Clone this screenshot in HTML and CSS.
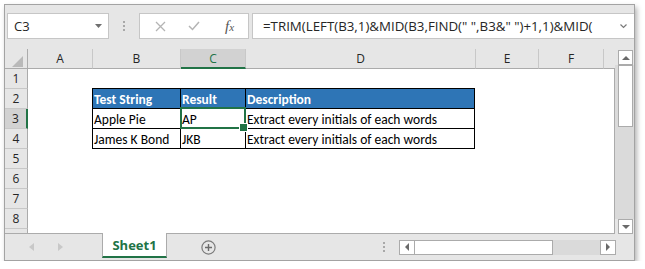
FILE: index.html
```html
<!DOCTYPE html>
<html lang="en">
<head>
  <meta charset="UTF-8">
  <title>Extract initials</title>
  <link rel="stylesheet" href="styles.css">
</head>
<body>
  <div class="window">
    <!-- formula bar -->
    <div class="fbar">
      <div class="box namebox">
        <span>C3</span>
        <svg width="7" height="4" viewBox="0 0 7 4"><polygon points="0,0 7,0 3.5,4" fill="#6f6f6f"/></svg>
      </div>
      <div class="grip"><i></i><i></i><i></i></div>
      <div class="box fxbox">
        <svg class="ico-x" width="11" height="11" viewBox="0 0 11 11"><path d="M1 1 L10 10 M10 1 L1 10" stroke="#b4b4b4" stroke-width="1.3"/></svg>
        <svg class="ico-ok" width="12" height="10" viewBox="0 0 12 10"><polyline points="1,5 4.5,8.5 11,1" fill="none" stroke="#b4b4b4" stroke-width="1.5"/></svg>
        <span class="fx">f<small>x</small></span>
      </div>
      <div class="box formula">
        <span>=TRIM(LEFT(B3,1)&amp;MID(B3,FIND(" ",B3&amp;" ")+1,1)&amp;MID(</span>
        <svg width="7" height="5" viewBox="0 0 7 5"><polyline points="0.5,0.5 3.5,3.5 6.5,0.5" fill="none" stroke="#7a7a7a" stroke-width="1.2"/></svg>
      </div>
    </div>

    <!-- sheet -->
    <div class="sheet">
      <div class="grid">
        <div class="colheads">
          <div class="corner"><svg width="11" height="11" viewBox="0 0 11 11"><polygon points="11,0 11,11 0,11" fill="#b9b9b9"/></svg></div>
          <div class="ch col-a">A</div>
          <div class="ch col-b">B</div>
          <div class="ch col-c sel">C</div>
          <div class="ch col-d">D</div>
          <div class="ch col-e">E</div>
          <div class="ch col-f">F</div>
          <div class="ch fill"></div>
        </div>
        <div class="body">
          <div class="rowheads">
            <div class="rh">1</div>
            <div class="rh">2</div>
            <div class="rh sel">3</div>
            <div class="rh">4</div>
            <div class="rh">5</div>
            <div class="rh">6</div>
            <div class="rh">7</div>
            <div class="rh">8</div>
            <div class="rh"></div>
          </div>
          <div class="cells">
            <div class="tbl">
              <div class="th">Test String</div>
              <div class="th">Result</div>
              <div class="th">Description</div>
              <div>Apple Pie</div>
              <div class="active">AP</div>
              <div>Extract every initials of each words</div>
              <div>James K Bond</div>
              <div>JKB</div>
              <div>Extract every initials of each words</div>
            </div>
          </div>
        </div>
      </div>
      <div class="vscroll">
        <div class="sbtn up"><svg width="8" height="4" viewBox="0 0 8 4"><polygon points="0,4 8,4 4,0" fill="#6a6a6a"/></svg></div>
        <div class="vtrack"><div class="vthumb"></div></div>
        <div class="sbtn down"><svg width="8" height="4" viewBox="0 0 8 4"><polygon points="0,0 8,0 4,4" fill="#6a6a6a"/></svg></div>
      </div>
    </div>

    <!-- sheet tabs -->
    <div class="tabbar">
      <div class="nav">
        <svg width="5" height="8" viewBox="0 0 5 8"><polygon points="5,0 5,8 0,4" fill="#c8c8c8"/></svg>
        <svg width="5" height="8" viewBox="0 0 5 8"><polygon points="0,0 0,8 5,4" fill="#c8c8c8"/></svg>
      </div>
      <div class="tab">Sheet1</div>
      <svg class="add" width="15" height="15" viewBox="0 0 15 15"><circle cx="7.5" cy="7.5" r="6.6" fill="none" stroke="#7b7b7b" stroke-width="1.2"/><path d="M7.5 4 V11 M4 7.5 H11" stroke="#6b6b6b" stroke-width="1.4"/></svg>
      <div class="grip"><i></i><i></i><i></i></div>
      <div class="hscroll">
        <div class="sbtn"><svg width="4" height="8" viewBox="0 0 4 8"><polygon points="4,0 4,8 0,4" fill="#6a6a6a"/></svg></div>
        <div class="hthumb"></div>
        <div class="htrack"></div>
        <div class="sbtn"><svg width="4" height="8" viewBox="0 0 4 8"><polygon points="0,0 0,8 4,4" fill="#6a6a6a"/></svg></div>
      </div>
    </div>
  </div>
</body>
</html>
```

FILE: styles.css
```css
* {
  box-sizing: border-box;
}
body {
  margin: 0;
  background: #fff;
  font-family: "Segoe UI", "Open Sans", sans-serif;
  font-size: 12px;
  color: #262626;
}
.window {
  margin: 4px 0 0 4px;
  width: 631px;
  height: 257px;
  border: 1px solid #a3a3a3;
  background: #e6e6e6;
  box-shadow: 2px 3px 5px rgba(0, 0, 0, 0.3);
  display: flex;
  flex-direction: column;
  overflow: hidden;
}

/* formula bar */
.fbar {
  height: 44px;
  flex: none;
  display: flex;
  align-items: flex-start;
  padding: 8px 0 0 2px;
}
.box {
  height: 26px;
  background: #fff;
  border: 1px solid #c6c6c6;
  display: flex;
  align-items: center;
}
.namebox {
  width: 102px;
  padding: 0 6px;
  justify-content: space-between;
  font-size: 13px;
}
.grip {
  width: 30px;
  height: 26px;
  display: flex;
  flex-direction: column;
  align-items: center;
  justify-content: center;
  gap: 2px;
}
.grip i {
  width: 2px;
  height: 2px;
  background: #a8a8a8;
}
.fxbox {
  width: 110px;
  padding-left: 15px;
}
.ico-ok {
  margin-left: 22px;
}
.fx {
  margin-left: 25px;
  font-family: "Liberation Serif", serif;
  font-style: italic;
  font-size: 15px;
  color: #555;
}
.fx small {
  font-size: 11px;
}
.formula {
  flex: 1;
  margin-left: 3px;
  border-right: none;
  padding: 0 7px 0 10px;
  justify-content: space-between;
  white-space: nowrap;
  overflow: hidden;
  font-size: 13.3px;
}

/* grid */
.sheet {
  height: 185px;
  flex: none;
  display: flex;
}
.grid {
  width: 610px;
  display: flex;
  flex-direction: column;
}
.colheads {
  height: 20px;
  flex: none;
  display: flex;
}
.colheads > div {
  border-bottom: 1px solid #ababab;
  border-right: 1px solid #c8c8c8;
  display: flex;
  align-items: center;
  justify-content: center;
}
.corner {
  width: 23px;
  padding: 6px 0 0 2px;
  border-right-color: #ababab !important;
}
.col-a { width: 65px; }
.col-b { width: 88px; }
.col-c { width: 65px; }
.col-d { width: 230px; }
.col-e { width: 63px; }
.col-f { width: 65px; }
.colheads .fill {
  flex: 1;
  border-right: none;
}
.ch.sel {
  background: #d2d2d2;
  color: #217346;
  border-bottom: 2px solid #217346;
}
.body {
  flex: 1;
  display: flex;
  border-right: 1px solid #ababab;
  border-bottom: 1px solid #ababab;
  overflow: hidden;
}
.rowheads {
  width: 23px;
  flex: none;
}
.rh {
  height: 20px;
  border-right: 1px solid #ababab;
  border-bottom: 1px solid #c8c8c8;
  display: flex;
  align-items: center;
  justify-content: center;
}
.rh.sel {
  background: #d2d2d2;
  border-right: 2px solid #217346;
}
.cells {
  flex: 1;
  background: #fff;
  padding: 19px 0 0 64px;
}

/* data table */
.tbl {
  display: grid;
  grid-template-columns: 88px 65px 229px;
  grid-auto-rows: 20px;
  width: max-content;
  border-left: 1px solid #000;
  border-top: 1px solid #000;
  font-family: "Carlito", "Lato", sans-serif;
  font-size: 13.5px;
  color: #000;
}
.tbl > div {
  border-right: 1px solid #000;
  border-bottom: 1px solid #000;
  padding: 1px 0 0 1px;
  line-height: 19px;
  white-space: nowrap;
}
.tbl .th {
  background: #2e75b6;
  color: #fff;
  font-weight: bold;
}
.tbl .active {
  position: relative;
}
.tbl .active::after {
  content: "";
  position: absolute;
  top: -2px;
  left: -1px;
  right: -1px;
  bottom: -1px;
  border: 2px solid #217346;
}
.tbl .active::before {
  content: "";
  position: absolute;
  right: -3px;
  bottom: -4px;
  width: 7px;
  height: 7px;
  background: #217346;
  border: 1px solid #fff;
  z-index: 1;
}

/* scrollbars */
.vscroll {
  flex: 1;
  display: flex;
  flex-direction: column;
}
.sbtn {
  width: 15px;
  height: 15px;
  flex: none;
  background: #fff;
  border: 1px solid #ababab;
  display: flex;
  align-items: center;
  justify-content: center;
}
.vscroll .sbtn {
  margin-left: 3px;
}
.vscroll .up {
  margin-top: 1px;
}
.vtrack {
  flex: 1;
  background: #dadada;
  padding-left: 3px;
}
.vthumb {
  width: 15px;
  height: 62px;
  background: #fff;
  border: 1px solid #ababab;
}

/* sheet tabs */
.tabbar {
  flex: 1;
  display: flex;
  align-items: center;
}
.nav {
  width: 97px;
  align-self: stretch;
  display: flex;
  align-items: center;
  padding-left: 24px;
  gap: 24px;
}
.tab {
  width: 65px;
  height: 25px;
  align-self: flex-start;
  margin-top: -1px;
  background: #fff;
  border-left: 1px solid #ababab;
  border-right: 1px solid #ababab;
  border-bottom: 2px solid #217346;
  color: #217346;
  font-weight: bold;
  font-size: 13px;
  display: flex;
  align-items: center;
  justify-content: center;
}
.add {
  margin-left: 34px;
}
.tabbar .grip {
  width: 2px;
  margin-left: 167px;
}
.hscroll {
  display: flex;
  margin-left: 14px;
  height: 15px;
}
.hscroll .sbtn {
  width: 16px;
}
.hthumb {
  width: 138px;
  background: #fff;
  border: 1px solid #ababab;
  border-left: none;
}
.htrack {
  width: 47px;
  background: #dadada;
}
```
